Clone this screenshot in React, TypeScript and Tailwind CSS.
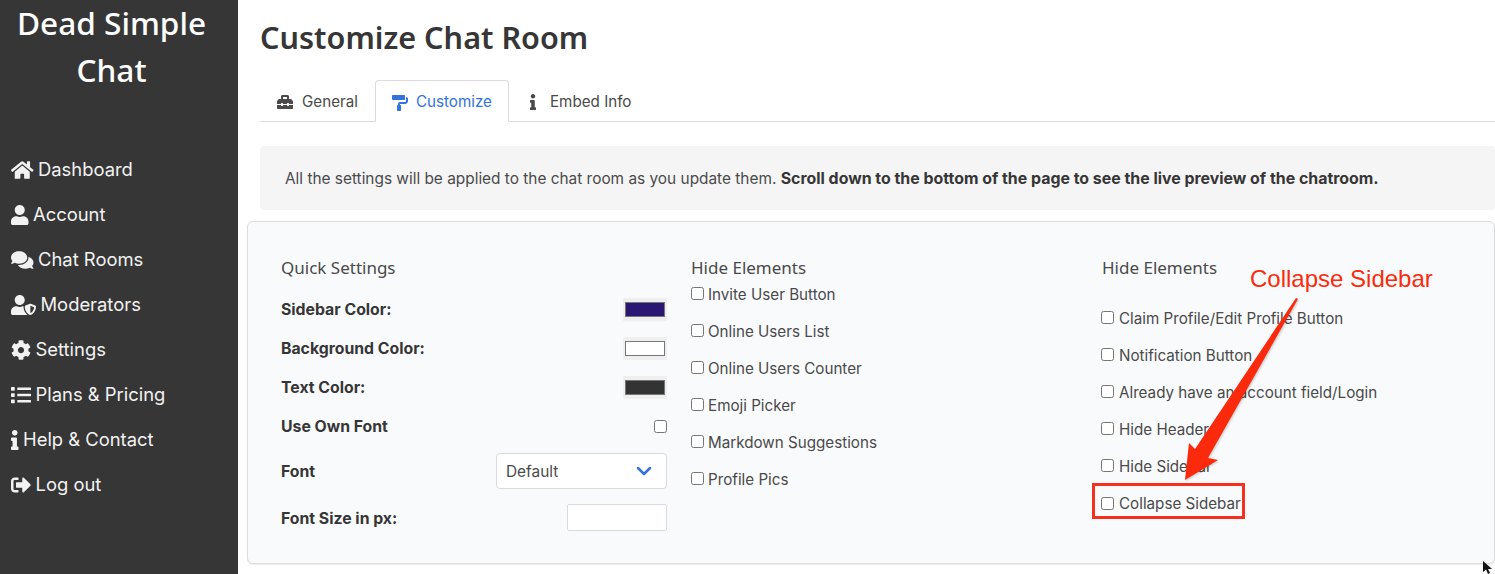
import { ChevronDown } from "lucide-react";
import {
  FaCog,
  FaComments,
  FaHome,
  FaInfo,
  FaList,
  FaPaintRoller,
  FaSignOutAlt,
  FaToolbox,
  FaUser,
  FaUserShield,
} from "react-icons/fa";

const NAV_ITEMS = [
  { label: "Dashboard", icon: FaHome, iconClass: "w-[22.5px]" },
  { label: "Account", icon: FaUser, iconClass: "w-[17.5px]" },
  { label: "Chat Rooms", icon: FaComments, iconClass: "w-[22.5px]" },
  { label: "Moderators", icon: FaUserShield, iconClass: "w-[25px]" },
  { label: "Settings", icon: FaCog, iconClass: "w-[20px]" },
  { label: "Plans & Pricing", icon: FaList, iconClass: "w-[20px]" },
  { label: "Help & Contact", icon: FaInfo, iconClass: "w-[7.5px]" },
  { label: "Log out", icon: FaSignOutAlt, iconClass: "w-[20px]" },
];

const MIDDLE_ITEMS = [
  "Invite User Button",
  "Online Users List",
  "Online Users Counter",
  "Emoji Picker",
  "Markdown Suggestions",
  "Profile Pics",
];

const RIGHT_ITEMS = [
  "Claim Profile/Edit Profile Button",
  "Notification Button",
  "Already have an account field/Login",
  "Hide Header",
  "Hide Sidebar",
];

function Sidebar() {
  return (
    <aside className="w-[238px] shrink-0 bg-[#363636] text-white">
      <div className="-mt-[1px] pr-[15px] text-center font-['Noto_Sans',sans-serif] text-[31.6px] font-medium leading-[47px]">
        Dead Simple
        <br />
        Chat
      </div>
      <nav className="mt-[54px] flex flex-col pl-[11px]">
        {NAV_ITEMS.map((item) => (
          <div key={item.label} className="flex h-[45px] items-center text-[18.4px] text-[#f2f2f2]">
            <item.icon className={`${item.iconClass} mr-[4.5px] h-[20px] shrink-0`} />
            {item.label}
          </div>
        ))}
      </nav>
    </aside>
  );
}

function ColorRow({ label, color }: { label: string; color: string }) {
  return (
    <div className="flex h-[39px] items-center justify-between">
      <span className="font-bold">{label}</span>
      <span className="flex h-[23px] w-[44px] items-center justify-center bg-[#efefef]">
        <span className="h-[15px] w-[40px] border border-[#767676]" style={{ backgroundColor: color }} />
      </span>
    </div>
  );
}

function CheckRow({ label, gap }: { label: string; gap: string }) {
  return (
    <label className="flex h-[37px] items-center text-[15.2px]">
      <span className={`${gap} h-[13px] w-[13px] rounded-[2.5px] border border-[#767676] bg-white`} />
      <span className="pt-[4px]">{label}</span>
    </label>
  );
}

export default function App() {
  return (
    <div className="flex h-[574px] w-[1495px] overflow-hidden bg-white font-['Inter',sans-serif] text-[15.2px] text-[#4a4a4a]">
      <Sidebar />
      <main className="relative min-w-0 flex-1 pl-[22px]">
        <h1 className="pt-[17px] font-['Noto_Sans',sans-serif] text-[30.6px] font-semibold leading-[40px] text-[#363636]">
          Customize Chat Room
        </h1>

        <div className="mt-[23px] flex h-[42px] border-b border-[#dbdbdb]">
          <div className="flex items-center pl-[17px] pr-[17px] pt-[3px]">
            <FaToolbox className="mr-[9px] h-[16px] w-[16px] text-[#4a4a4a]" />
            General
          </div>
          <div className="-mb-px flex items-center rounded-t border border-[#dbdbdb] border-b-white px-[16px] pt-[3px] text-[#3273dc]">
            <FaPaintRoller className="mr-[8px] h-[16px] w-[16px]" />
            Customize
          </div>
          <div className="flex items-center pl-[21px] pt-[3px]">
            <FaInfo className="mr-[14px] h-[16px] w-[6px] text-[#4a4a4a]" />
            Embed Info
          </div>
        </div>

        <div className="mt-[24px] flex h-[64px] items-center whitespace-nowrap rounded bg-[#f5f5f5] pl-[25px] pt-[2px] text-[15.4px]">
          All the settings will be applied to the chat room as you update them.&nbsp;
          <strong className="text-[15.9px] font-bold text-[#363636]">
            Scroll down to the bottom of the page to see the live preview of the chatroom.
          </strong>
        </div>

        <section className="-ml-[13px] mt-[11px] flex h-[343px] rounded-[6px] border border-[#dddddd] bg-[#f9fafc] pl-[33px] pt-[35px] shadow-[0_1px_1px_rgba(0,0,0,0.08)]">
          <div className="w-[386px]">
            <h3 className="font-['Noto_Sans',sans-serif] text-[17px] leading-[22px] text-[#4a4a4a]">Quick Settings</h3>
            <div className="mt-[11px] text-[15.8px] text-[#363636]">
              <ColorRow label="Sidebar Color:" color="#2a1673" />
              <ColorRow label="Background Color:" color="#ffffff" />
              <ColorRow label="Text Color:" color="#333333" />
              <div className="flex h-[39px] items-center justify-between">
                <span className="font-bold">Use Own Font</span>
                <span className="h-[13px] w-[13px] rounded-[2.5px] border border-[#767676] bg-white" />
              </div>
              <div className="mt-[7px] flex h-[36px] items-center justify-between">
                <span className="pt-[2px] font-bold">Font</span>
                <div className="flex h-[36px] w-[171px] items-center justify-between rounded border border-[#dbdbdb] bg-white pl-[9px] pr-[10px] text-[15.4px] text-[#4a4a4a]">
                  <span className="pt-[2px]">Default</span>
                  <ChevronDown className="h-[24px] w-[24px] text-[#3273dc]" strokeWidth={2.5} />
                </div>
              </div>
              <div className="mt-[15px] flex h-[27px] items-center justify-between">
                <span className="pt-[2px] font-bold">Font Size in px:</span>
                <div className="h-[27px] w-[100px] rounded-[2px] border border-[#dbdbdb] bg-white" />
              </div>
            </div>
          </div>

          <div className="ml-[24px] w-[411px]">
            <h3 className="font-['Noto_Sans',sans-serif] text-[17px] leading-[22px] text-[#4a4a4a]">Hide Elements</h3>
            <div className="-mt-[4px]">
              {MIDDLE_ITEMS.map((label) => (
                <CheckRow key={label} label={label} gap="mr-[4px]" />
              ))}
            </div>
          </div>

          <div className="w-[300px]">
            <h3 className="font-['Noto_Sans',sans-serif] text-[17px] leading-[22px] text-[#4a4a4a]">Hide Elements</h3>
            <div className="-ml-[1px] mt-[20px]">
              {RIGHT_ITEMS.map((label) => (
                <CheckRow key={label} label={label} gap="mr-[5px]" />
              ))}
              <div className="-ml-[9px] -mt-[1px] flex h-[36px] w-[153px] items-center border-[3px] border-[#f5301e] pl-[6px] pt-[4px] text-[15.2px]">
                <span className="mr-[5px] h-[13px] w-[13px] shrink-0 rounded-[2.5px] border border-[#767676] bg-white" />
                <span className="whitespace-nowrap pt-[2px]">Collapse Sidebar</span>
              </div>
            </div>
          </div>
        </section>

        <span className="absolute left-[1012px] top-[265px] font-['Liberation_Sans',sans-serif] text-[24px] leading-[28px] text-[#fb2a0c]">
          Collapse Sidebar
        </span>
        <svg
          className="absolute left-[942px] top-[290px] h-[200px] w-[130px] drop-shadow-[1px_1px_1px_rgba(0,0,0,0.2)]"
          viewBox="0 0 130 200"
        >
          <path d="M116 8 L118 9 L28 168 L38 170 L5 190 L9 153 L15 159 Z" fill="#fb2a0c" />
        </svg>
        <svg className="absolute left-[1245px] top-[561px] h-[13px] w-[10px]" viewBox="0 0 10 13">
          <path d="M0 0 L0 11 L3 8.5 L5 13 L7 12 L5 8 L9 8 Z" fill="#111" />
        </svg>
      </main>
    </div>
  );
}
